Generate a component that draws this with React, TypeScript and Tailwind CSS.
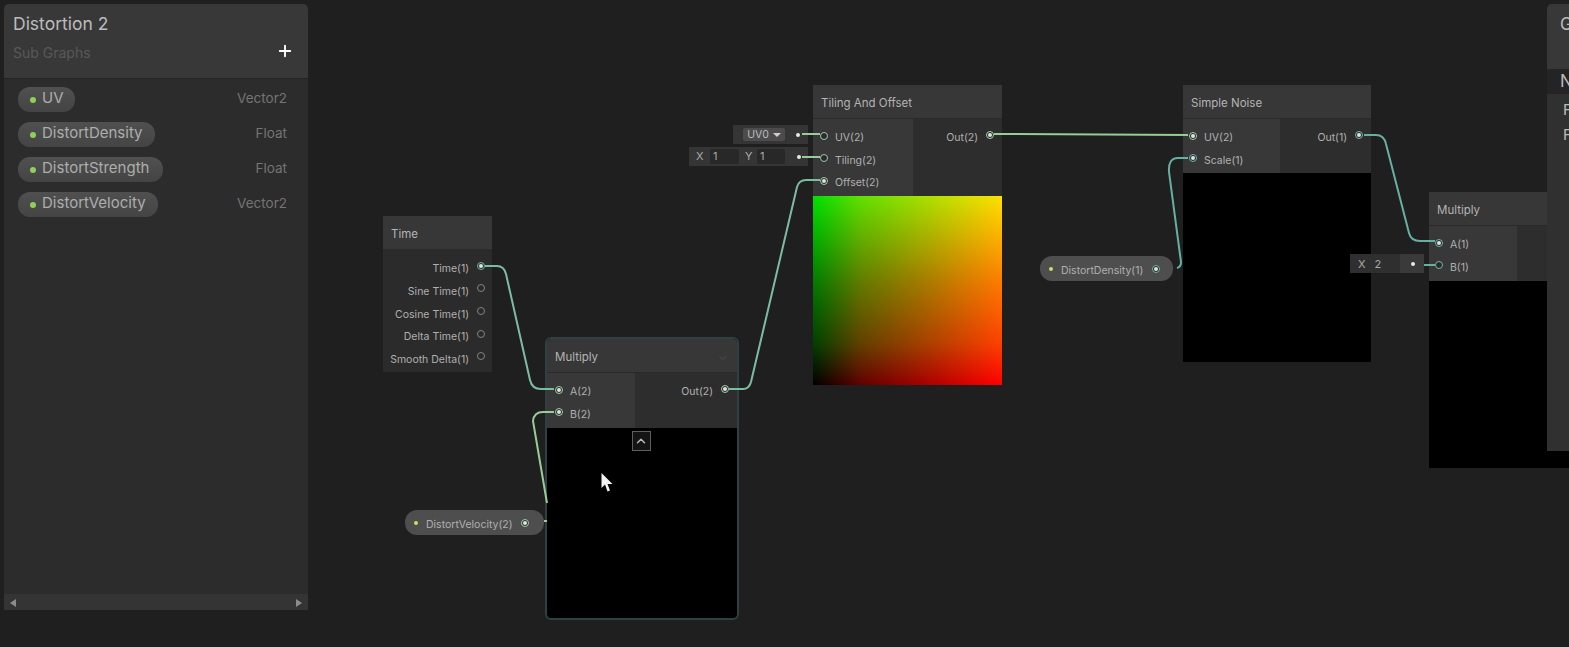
import { ChevronDown, ChevronUp, Plus } from 'lucide-react';
import type { ReactNode } from 'react';

const blackboard = [
  { name: 'UV', type: 'Vector2', width: 'w-[57px]' },
  { name: 'DistortDensity', type: 'Float', width: 'w-[137px]' },
  { name: 'DistortStrength', type: 'Float', width: 'w-[145px]' },
  { name: 'DistortVelocity', type: 'Vector2', width: 'w-[140px]' },
];

function Port({ on, tone = 'green' }: { on?: boolean; tone?: 'green' | 'teal' | 'hollow' }) {
  const ring =
    tone === 'teal' ? 'border-[#70b4a6]' : tone === 'hollow' ? 'border-[#9cc8aa]' : on ? 'border-[#a4ccae]' : 'border-[#808581]';
  return (
    <span className={`flex size-[8px] shrink-0 items-center justify-center rounded-full border bg-[#2a2a2a] ${ring}`}>
      {on && <span className="size-[4px] rounded-full bg-[#d8e6dc]" />}
    </span>
  );
}

function InRow({ label, on, tone, tight }: { label: string; on?: boolean; tone?: 'green' | 'teal' | 'hollow'; tight?: boolean }) {
  return (
    <div className={`flex h-[22.6px] items-center gap-[7px] ${tight ? 'pl-[6px]' : 'pl-[7px]'}`}>
      <span className="-mt-[1px]">
        <Port on={on} tone={tone} />
      </span>
      <span className="pt-[3px]">{label}</span>
    </div>
  );
}

function OutRow({ label, on, tone }: { label: string; on?: boolean; tone?: 'green' | 'teal' }) {
  return (
    <div className="flex h-[22.6px] items-center justify-end gap-[8px] pr-[7px]">
      <span className="pt-[4px]">{label}</span>
      <span className="-mt-[3px]">
        <Port on={on} tone={tone} />
      </span>
    </div>
  );
}

function NodeHeader({ title, children }: { title: string; children?: ReactNode }) {
  return (
    <div className="flex h-[34px] shrink-0 items-center justify-between border-b border-[#2a2a2a] bg-[#373737] px-[8px] pt-[4px] text-[11.5px] text-[#b4b4b4]">
      <span>{title}</span>
      {children}
    </div>
  );
}

function Pill({ className, label, tone, portGap }: { className: string; label: string; tone: 'green' | 'teal'; portGap: string }) {
  return (
    <div className={`absolute flex h-[25px] items-center rounded-[12px] bg-[#4e4e4e] text-[10.5px] text-[#b0b0b0] ${className}`}>
      <span className="ml-[9px] size-[4px] rounded-full bg-[#c8e060]" />
      <span className="ml-[8px] flex-1 pt-[5px] whitespace-nowrap">{label}</span>
      <span className={portGap}>
        <Port on tone={tone} />
      </span>
    </div>
  );
}

function Dot() {
  return <span className="block size-[4px] rounded-full bg-[#e8e8e8]" />;
}

export default function App() {
  return (
    <div className="relative h-[647px] w-[1569px] overflow-hidden bg-[#1f1f1f] font-['Inter',sans-serif]">
      {/* Time */}
      <div className="absolute left-[383px] top-[216px] flex h-[156px] w-[109px] flex-col bg-[#2b2b2b] text-[10.5px] text-[#b0b0b0]">
        <NodeHeader title="Time" />
        <div className="flex-1 pt-[6px] whitespace-nowrap">
          <OutRow label="Time(1)" on tone="teal" />
          <OutRow label="Sine Time(1)" />
          <OutRow label="Cosine Time(1)" />
          <OutRow label="Delta Time(1)" />
          <OutRow label="Smooth Delta(1)" />
        </div>
      </div>

      {/* Multiply, selected */}
      <div className="absolute left-[545px] top-[337px] flex h-[283px] w-[194px] flex-col overflow-hidden rounded-[6px] border-2 border-[#2e403f] bg-black text-[10.5px] text-[#b0b0b0]">
        <NodeHeader title="Multiply">
          <ChevronDown className="size-[12px] text-[#505050]" />
        </NodeHeader>
        <div className="flex h-[55px] shrink-0 bg-[#2d2d2d]">
          <div className="w-[88px] bg-[#383838] pl-[1px] pt-[6px]">
            <InRow label="A(2)" on />
            <InRow label="B(2)" on />
          </div>
          <div className="flex-1 pr-[1px] pt-[6px]">
            <OutRow label="Out(2)" on />
          </div>
        </div>
        <div className="flex justify-center pr-[2px] pt-[3px]">
          <span className="flex h-[20px] w-[19px] items-center justify-center border border-[#5e5e5e] bg-[#141414]">
            <ChevronUp className="size-[14px] text-[#b8b8b8]" strokeWidth={2.5} />
          </span>
        </div>
      </div>

      {/* Tiling And Offset */}
      <div className="absolute left-[813px] top-[85px] flex h-[300px] w-[189px] flex-col text-[10.5px] text-[#b0b0b0]">
        <NodeHeader title="Tiling And Offset" />
        <div className="flex h-[77px] shrink-0 bg-[#2d2d2d]">
          <div className="w-[100px] bg-[#383838] pt-[6px]">
            <InRow label="UV(2)" tone="hollow" />
            <InRow label="Tiling(2)" tone="hollow" />
            <InRow label="Offset(2)" on />
          </div>
          <div className="flex-1 pr-[1px] pt-[6px]">
            <OutRow label="Out(2)" on />
          </div>
        </div>
        <div className="flex-1 bg-[linear-gradient(to_top,#000000,#004000_22%,#007c00_55%,#00e000),linear-gradient(to_right,#000000,#600000_25%,#a80000_60%,#ff0000)] bg-blend-screen" />
      </div>

      {/* Simple Noise */}
      <div className="absolute left-[1183px] top-[85px] flex h-[277px] w-[188px] flex-col bg-black text-[10.5px] text-[#b0b0b0]">
        <NodeHeader title="Simple Noise" />
        <div className="flex h-[54px] shrink-0 bg-[#2d2d2d]">
          <div className="w-[97px] bg-[#383838] pt-[6px]">
            <InRow label="UV(2)" on tight />
            <InRow label="Scale(1)" on tone="teal" tight />
          </div>
          <div className="flex-1 pr-[1px] pt-[6px]">
            <OutRow label="Out(1)" on tone="teal" />
          </div>
        </div>
      </div>

      {/* second Multiply, runs under the inspector */}
      <div className="absolute left-[1429px] top-[192px] flex h-[276px] w-[140px] flex-col bg-black text-[10.5px] text-[#b0b0b0]">
        <NodeHeader title="Multiply" />
        <div className="flex h-[55px] shrink-0 bg-[#2d2d2d]">
          <div className="w-[88px] bg-[#383838] pt-[6px]">
            <InRow label="A(1)" on tone="teal" tight />
            <InRow label="B(1)" tone="teal" tight />
          </div>
        </div>
      </div>

      {/* default value chips */}
      <div className="absolute left-[733px] top-[125px] flex h-[19px] w-[75px] items-center bg-[#353535] pl-[10px] text-[10.5px] text-[#bcbcbc]">
        <span className="flex h-[13px] w-[42px] items-center justify-center gap-[4px] rounded-[2px] bg-[#4c4c4c]">
          UV0
          <span className="border-x-[4px] border-t-[4px] border-x-transparent border-t-[#d0d0d0]" />
        </span>
        <span className="ml-[11px]">
          <Dot />
        </span>
      </div>
      <div className="absolute left-[689px] top-[147px] flex h-[19px] w-[119px] items-center bg-[#353535] text-[11px] text-[#aaaaaa]">
        <span className="w-[21px] pl-[7px]">X</span>
        <span className="h-[15px] w-[29px] rounded-[2px] bg-[#282828] pl-[3px] leading-[15px]">1</span>
        <span className="w-[18px] pl-[6px]">Y</span>
        <span className="h-[15px] w-[28px] rounded-[2px] bg-[#282828] pl-[3px] leading-[15px]">1</span>
        <span className="ml-[12px]">
          <Dot />
        </span>
      </div>
      <div className="absolute left-[1350px] top-[254px] flex h-[19px] w-[74px] items-center bg-[#3a3a3a] text-[11px] text-[#aaaaaa]">
        <span className="h-[19px] w-[50px] bg-[#2f2f2f] pl-[8px] leading-[20px]">
          X<span className="ml-[9px]">2</span>
        </span>
        <span className="ml-[11px]">
          <Dot />
        </span>
      </div>

      <Pill className="left-[1040px] top-[256px] w-[133px]" label="DistortDensity(1)" tone="teal" portGap="mr-[13px]" />
      <Pill className="left-[405px] top-[510px] w-[139px]" label="DistortVelocity(2)" tone="green" portGap="mr-[15px]" />

      {/* wires */}
      <svg className="pointer-events-none absolute left-0 top-0" width="1569" height="647" fill="none" strokeWidth="2">
        <g stroke="#7cbda2">
          <path d="M485 266H497Q504 266 506 274L530 380Q532 389 541 389H554" />
          <path d="M729 389H743Q749 389 751 382L797 187Q799 180 806 180H820" />
        </g>
        <g stroke="#98cc98">
          <path d="M554 412H543Q534 412 533 421L547 503" />
          <path d="M544 521H547" />
          <path d="M994 134L1188 135" />
          <path d="M802 134H820" />
          <path d="M802 157H820" />
        </g>
        <g stroke="#66b0a2">
          <path d="M1177 268Q1181 267 1181 262L1169 172Q1168 158 1178 158H1188" />
          <path d="M1364 135H1376Q1384 135 1386 144L1409 233Q1411 241 1420 241H1435" />
          <path d="M1424 265H1435" />
        </g>
      </svg>

      {/* cursor */}
      <svg className="absolute left-[600px] top-[472px]" width="14" height="21" viewBox="0 0 14 21">
        <path d="M1.5 1V16L5 12.5L7.5 19.5L10 18.5L7.5 12H12.5Z" fill="#f2f2f2" />
      </svg>

      {/* blackboard */}
      <div className="absolute left-[4px] top-[4px] flex h-[606px] w-[304px] flex-col overflow-hidden rounded-t-[5px] bg-[#2c2c2c]">
        <div className="relative h-[75px] shrink-0 border-b border-[#242424] bg-[#383838] pl-[9px]">
          <div className="pt-[9px] text-[17.5px] leading-[22px] text-[#bcbcbc]">Distortion 2</div>
          <div className="pt-[9px] text-[14px] leading-[18px] text-[#585858]">Sub Graphs</div>
          <Plus className="absolute right-[14px] top-[38px] size-[18px] text-white" strokeWidth={2.5} />
        </div>
        <div className="flex flex-1 flex-col gap-[10px] pl-[14px] pr-[21px] pt-[8px]">
          {blackboard.map((item) => (
            <div key={item.name} className="flex items-center justify-between">
              <div className={`flex h-[25px] items-center rounded-[12px] bg-[linear-gradient(to_bottom,#505050,#444444)] text-[15px] text-[#adadad] ${item.width}`}>
                <span className="ml-[12px] size-[6px] rounded-full bg-[#8fd058]" />
                <span className="ml-[6px] pb-[2px]">{item.name}</span>
              </div>
              <span className="-mt-[2px] text-[13.5px] text-[#747474]">{item.type}</span>
            </div>
          ))}
        </div>
        <div className="flex h-[16px] shrink-0 items-center justify-between bg-[#343434] px-[6px] pt-[1px]">
          <span className="border-y-[4.5px] border-r-[6px] border-y-transparent border-r-[#8c8c8c]" />
          <span className="border-y-[4.5px] border-l-[6px] border-y-transparent border-l-[#8c8c8c]" />
        </div>
      </div>

      {/* inspector, cut off by the window edge */}
      <div className="absolute left-[1547px] top-[4px] flex h-[447px] w-[40px] flex-col overflow-hidden rounded-t-[5px] bg-[#303030] text-[#bcbcbc]">
        <div className="h-[65px] shrink-0 bg-[#383838] pl-[13px] pt-[9px] text-[17px] leading-[22px]">G</div>
        <div className="h-[25px] shrink-0 bg-[#242424] pl-[13px] text-[17px] leading-[25px]">N</div>
        <div className="pl-[16px] pt-[3px] text-[15px] leading-[25px]">
          <div>F</div>
          <div>F</div>
        </div>
      </div>
    </div>
  );
}
